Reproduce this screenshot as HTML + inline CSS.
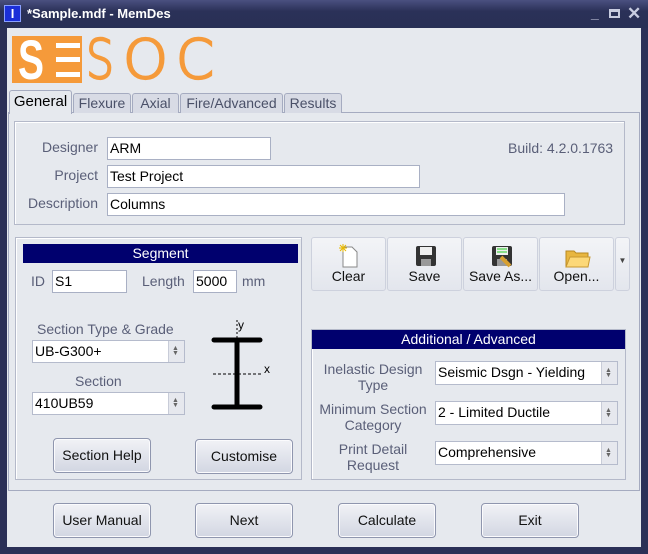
<!DOCTYPE html>
<html><head><style>
*{box-sizing:border-box;margin:0;padding:0}
body{width:648px;height:554px;background:#2b3057;font-family:"Liberation Sans",sans-serif;font-size:14px;position:relative;overflow:hidden}
.a{position:absolute}
#title{left:0;top:0;width:648px;height:28px;background:linear-gradient(#4a5080,#2b3158 40%,#283055);}
#client{left:7px;top:28px;width:634px;height:519px;background:#e6e9ee}
.lbl{position:absolute;color:#5a5f78;font-size:14px;white-space:nowrap}
.inp{position:absolute;background:#fff;border:1px solid #a9b0c4;color:#000;font-size:14px;padding:1px 2px;line-height:18px;white-space:nowrap}
.sel{position:absolute;background:#fff;border:1px solid #b5bbcc;color:#000;font-size:14px;padding:1px 2px;line-height:18px;white-space:nowrap}
.sel::after{content:"";position:absolute;right:0;top:0;width:15px;height:100%;background:#e6e8ee;border-left:1px solid #c8ccd8}
.sp{position:absolute;right:4px;width:7px;z-index:2;font-size:7px;color:#666;line-height:5px;text-align:center}
.btn{position:absolute;border:1px solid #8f96ae;border-radius:4px;background:linear-gradient(#f1f2f6,#d2d6e2);color:#111;font-size:14px;text-align:center;box-shadow:inset 0 0 0 1px #fbfbfd}
.box{position:absolute;border:1px solid #b4b9c9;box-shadow:inset 1px 1px 0 #fff}
.hdr{position:absolute;background:#00006e;color:#fff;text-align:center;font-size:14px;line-height:19px}
.tab{position:absolute;top:93px;height:20px;background:#d8dbe5;border:1px solid #a5abc0;border-bottom:none;border-radius:3px 3px 0 0;color:#4a5068;font-size:14px;line-height:19px;text-align:center}
.tb{position:absolute;top:237px;height:54px;width:75px;border:1px solid #cdd1dd;border-radius:3px;background:linear-gradient(#f3f4f7,#e3e6ed);text-align:center;font-size:14px;color:#111}
.tb span{position:absolute;left:0;right:0;top:30px}
</style></head><body>
<div id="title" class="a">
 <div class="a" style="left:4px;top:5px;width:17px;height:17px;background:#1b2fd8;border:1px solid #8aa0ff;color:#fff;font-size:13px;line-height:15px;text-align:center;font-weight:bold">I</div>
 <div class="a" style="left:27px;top:6px;color:#fff;font-weight:bold;font-size:13px">*Sample.mdf - MemDes</div>
 <div class="a" style="left:591px;top:5px;color:#c8cce0;font-size:14px;font-weight:bold">_</div>
 <div class="a" style="left:609px;top:9px;width:11px;height:9px;border:2px solid #c8cce0;border-top-width:3px"></div>
 <div class="a" style="left:627px;top:4px;color:#c8cce0;font-size:17px;font-weight:bold">✕</div>
</div>
<div id="client" class="a"></div>
<!-- logo -->
<svg class="a" style="left:0;top:28px" width="230" height="60">
 <rect x="12" y="8" width="70" height="47" fill="#f59a3a"/>
 <text x="18" y="51" font-family="Liberation Sans" font-weight="bold" font-size="56" fill="#fff" textLength="26" lengthAdjust="spacingAndGlyphs">S</text>
 <rect x="56" y="15" width="24" height="5" fill="#fff"/>
 <rect x="56" y="29" width="24" height="5" fill="#fff"/>
 <rect x="56" y="44" width="24" height="5" fill="#fff"/>
 <g font-family="DejaVu Sans" font-weight="200" font-size="54" fill="#f59a3a" stroke="#f59a3a" stroke-width="2.2">
  <text x="86" y="50" textLength="28" lengthAdjust="spacingAndGlyphs">S</text>
  <text x="123" y="50" textLength="45" lengthAdjust="spacingAndGlyphs">O</text>
  <text x="176" y="50" textLength="38" lengthAdjust="spacingAndGlyphs">C</text>
 </g>
</svg>
<!-- tab panel -->
<div class="a" style="left:8px;top:112px;width:632px;height:379px;border:1px solid #a5abc0;background:#e6e9ee"></div>
<div class="tab" style="left:73px;width:58px">Flexure</div>
<div class="tab" style="left:132px;width:47px">Axial</div>
<div class="tab" style="left:180px;width:103px">Fire/Advanced</div>
<div class="tab" style="left:284px;width:58px">Results</div>
<div class="tab" style="left:9px;top:90px;height:24px;background:#e6e9ee;color:#000;z-index:2;width:63px;line-height:22px;font-size:15px">General</div>
<!-- top box -->
<div class="box" style="left:14px;top:121px;width:611px;height:104px"></div>
<div class="lbl" style="right:550px;top:139px">Designer</div>
<div class="lbl" style="right:550px;top:167px">Project</div>
<div class="lbl" style="right:550px;top:195px">Description</div>
<div class="inp" style="left:107px;top:137px;width:164px;height:23px">ARM</div>
<div class="inp" style="left:107px;top:165px;width:313px;height:23px">Test Project</div>
<div class="inp" style="left:107px;top:193px;width:458px;height:23px">Columns</div>
<div class="lbl" style="left:508px;top:140px">Build: 4.2.0.1763</div>
<!-- segment -->
<div class="box" style="left:15px;top:237px;width:287px;height:243px"></div>
<div class="hdr" style="left:23px;top:244px;width:275px">Segment</div>
<div class="lbl" style="left:31px;top:273px">ID</div>
<div class="inp" style="left:52px;top:270px;width:75px;height:23px">S1</div>
<div class="lbl" style="left:142px;top:273px">Length</div>
<div class="inp" style="left:193px;top:270px;width:44px;height:23px">5000</div>
<div class="lbl" style="left:242px;top:273px">mm</div>
<div class="lbl" style="left:37px;top:321px">Section Type &amp; Grade</div>
<div class="sel" style="left:32px;top:340px;width:153px;height:23px">UB-G300+</div>
<div class="sp" style="left:172px;top:346px">▲<br>▼</div>
<div class="lbl" style="left:75px;top:373px">Section</div>
<div class="sel" style="left:32px;top:392px;width:153px;height:23px">410UB59</div>
<div class="sp" style="left:172px;top:398px">▲<br>▼</div>
<svg class="a" style="left:205px;top:315px" width="80" height="100">
 <line x1="32" y1="5" x2="32" y2="25" stroke="#000" stroke-dasharray="2,2"/>
 <text x="33" y="14" font-size="12" font-family="Liberation Sans">y</text>
 <line x1="9" y1="25" x2="55" y2="25" stroke="#000" stroke-width="5" stroke-linecap="round"/>
 <line x1="32" y1="25" x2="32" y2="92" stroke="#000" stroke-width="5"/>
 <line x1="9" y1="92" x2="55" y2="92" stroke="#000" stroke-width="5" stroke-linecap="round"/>
 <line x1="8" y1="59" x2="58" y2="59" stroke="#000" stroke-dasharray="3,2"/>
 <text x="59" y="58" font-size="12" font-family="Liberation Sans">x</text>
</svg>
<div class="btn" style="left:53px;top:438px;width:98px;height:35px;line-height:33px">Section Help</div>
<div class="btn" style="left:195px;top:439px;width:98px;height:35px;line-height:33px">Customise</div>
<!-- toolbar -->
<div class="tb" style="left:311px"><svg class="a" style="left:26px;top:6px" width="22" height="24"><path d="M5 3h9l5 5v15H5z" fill="#fff" stroke="#888"/><path d="M2 1l6 6M8 1L2 7M5 0v8M1 4h8" stroke="#e8b800"/></svg><span>Clear</span></div>
<div class="tb" style="left:387px"><svg class="a" style="left:27px;top:7px" width="22" height="22"><rect x="1" y="1" width="20" height="20" rx="2" fill="#333"/><rect x="5" y="2" width="12" height="8" fill="#eee"/><rect x="6" y="14" width="10" height="7" fill="#999"/></svg><span>Save</span></div>
<div class="tb" style="left:463px"><svg class="a" style="left:27px;top:7px" width="24" height="24"><rect x="1" y="1" width="20" height="20" rx="2" fill="#333"/><rect x="5" y="2" width="12" height="8" fill="#eee"/><path d="M6 4h10M6 7h10" stroke="#2c2"/><rect x="6" y="14" width="10" height="7" fill="#999"/><path d="M10 12l9 9" stroke="#d8a030" stroke-width="4"/></svg><span>Save As...</span></div>
<div class="tb" style="left:539px"><svg class="a" style="left:25px;top:10px" width="26" height="20"><path d="M1 3h8l2 2h12v14H1z" fill="#e8b640" stroke="#b88820"/><path d="M1 19l4-10h20l-2 10z" fill="#fcd878" stroke="#c89830"/></svg><span>Open...</span></div>
<div class="tb" style="left:615px;width:15px"><span style="top:18px;font-size:8px;color:#444">▼</span></div>
<!-- additional -->
<div class="box" style="left:311px;top:329px;width:315px;height:151px"></div>
<div class="hdr" style="left:312px;top:330px;width:313px">Additional / Advanced</div>
<div class="lbl" style="left:318px;top:361px;width:110px;text-align:center;white-space:normal;line-height:16px">Inelastic Design Type</div>
<div class="lbl" style="left:318px;top:401px;width:110px;text-align:center;white-space:normal;line-height:16px">Minimum Section Category</div>
<div class="lbl" style="left:318px;top:441px;width:110px;text-align:center;white-space:normal;line-height:16px">Print Detail Request</div>
<div class="sel" style="left:435px;top:361px;width:183px;height:24px">Seismic Dsgn - Yielding</div>
<div class="sp" style="left:605px;top:368px">▲<br>▼</div>
<div class="sel" style="left:435px;top:401px;width:183px;height:24px">2 - Limited Ductile</div>
<div class="sp" style="left:605px;top:408px">▲<br>▼</div>
<div class="sel" style="left:435px;top:441px;width:183px;height:24px">Comprehensive</div>
<div class="sp" style="left:605px;top:448px">▲<br>▼</div>
<!-- bottom -->
<div class="btn" style="left:53px;top:503px;width:98px;height:35px;line-height:33px">User Manual</div>
<div class="btn" style="left:195px;top:503px;width:98px;height:35px;line-height:33px">Next</div>
<div class="btn" style="left:338px;top:503px;width:98px;height:35px;line-height:33px">Calculate</div>
<div class="btn" style="left:481px;top:503px;width:98px;height:35px;line-height:33px">Exit</div>
</body></html>
